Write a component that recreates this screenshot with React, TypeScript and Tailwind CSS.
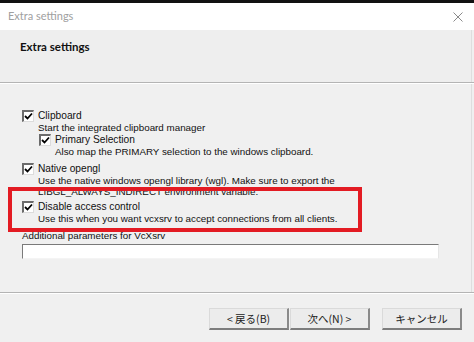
import React from "react";

const Check = ({ on = true }: { on?: boolean }) => (
  <div className="w-[12px] h-[12px] shrink-0 bg-white border-t-2 border-l-2 border-t-[#6b6b6b] border-l-[#6b6b6b] border-b border-r border-b-[#dcdcdc] border-r-[#dcdcdc] flex items-center justify-center">
    {on && (
      <svg width="9" height="9" viewBox="0 0 9 9">
        <path d="M1 4 L3.5 6.5 L8 1.5" fill="none" stroke="#000" strokeWidth="1.8" />
      </svg>
    )}
  </div>
);

const Btn = ({ children }: { children: React.ReactNode }) => (
  <div className="w-[80px] h-[22px] flex items-center justify-center bg-[#ececec] border-t border-l border-t-[#dadada] border-l-[#dadada] border-b-2 border-r-2 border-b-[#7d7d7d] border-r-[#8a8a8a] text-[10.5px] text-[#222] [font-family:'Noto_Sans_CJK_JP',sans-serif]">
    {children}
  </div>
);

export default function App() {
  const ui = "[font-family:'Liberation_Sans',Arial,sans-serif]";
  return (
    <div className="relative w-[474px] h-[342px] overflow-hidden bg-[#f0f0f0] flex flex-col">
      <div className="h-[3px] bg-[#111]" />
      <div className="h-[27px] bg-white flex items-center justify-between pl-[8px] pr-[11px]">
        <span className="text-[11px] text-[#a0a0a0] [font-family:Lato,sans-serif]">Extra settings</span>
        <svg width="10" height="10" viewBox="0 0 10 10">
          <path d="M0.5 0.5 L9.5 9.5 M9.5 0.5 L0.5 9.5" stroke="#8a8a8a" strokeWidth="1" />
        </svg>
      </div>
      <div className="flex flex-col flex-1">
        <div className="h-[52px] bg-[#eeeeee] pl-[20px] pt-[9px] border-r border-r-[#dedede] mr-[2px]">
          <div className="text-[11.5px] font-bold leading-[16px] text-[#111] [font-family:Lato,sans-serif]">Extra settings</div>
        </div>
        <div className="h-[2px] border-t border-t-[#b4b4b4] border-b border-b-white" />
        <div className={`h-[208px] pt-[25px] pl-[22px] text-[9.8px] leading-[11px] text-[#111] ${ui} border-r border-r-[#dedede] mr-[2px]`}>
          <div className="flex items-center gap-[4px] h-[13px] text-[10.2px]">
            <Check />
            <span>Clipboard</span>
          </div>
          <div className="pl-[16px]">Start the integrated clipboard manager</div>
          <div className="pl-[17px] flex items-center gap-[4px] h-[13px] text-[10.2px]">
            <Check />
            <span>Primary Selection</span>
          </div>
          <div className="pl-[33px]">Also map the PRIMARY selection to the windows clipboard.</div>
          <div className="mt-[5px] flex items-center gap-[4px] h-[13px] text-[10.2px]">
            <Check />
            <span>Native opengl</span>
          </div>
          <div className="pl-[16px]">Use the native windows opengl library (wgl). Make sure to export the</div>
          <div className="pl-[16px]">LIBGL_ALWAYS_INDIRECT environment variable.</div>
          <div className="mt-[3px] flex items-center gap-[4px] h-[13px] text-[10.2px]">
            <Check />
            <span>Disable access control</span>
          </div>
          <div className="pl-[16px]">Use this when you want vcxsrv to accept connections from all clients.</div>
          <div className="mt-[6px]">Additional parameters for VcXsrv</div>
          <div className="mt-[3px] w-[417px] h-[15px] bg-white border-t border-l border-t-[#7a7a7a] border-l-[#7a7a7a] border-b border-r border-b-[#f4f4f4] border-r-[#e6e6e6]" />
        </div>
        <div className="h-[2px] border-t border-t-[#b4b4b4] border-b border-b-white" />
        <div className="h-[48px] pt-[14px] pr-[12px] flex justify-end">
          <div className="flex gap-[1px]">
            <Btn>&lt; 戻る(B)</Btn>
            <Btn>次へ(N) &gt;</Btn>
          </div>
          <div className="ml-[12px]">
            <Btn>キャンセル</Btn>
          </div>
        </div>
      </div>
      <div className="absolute left-[8px] top-[187px] w-[354px] h-[45px] border-4 border-[#e31b23]" />
    </div>
  );
}
